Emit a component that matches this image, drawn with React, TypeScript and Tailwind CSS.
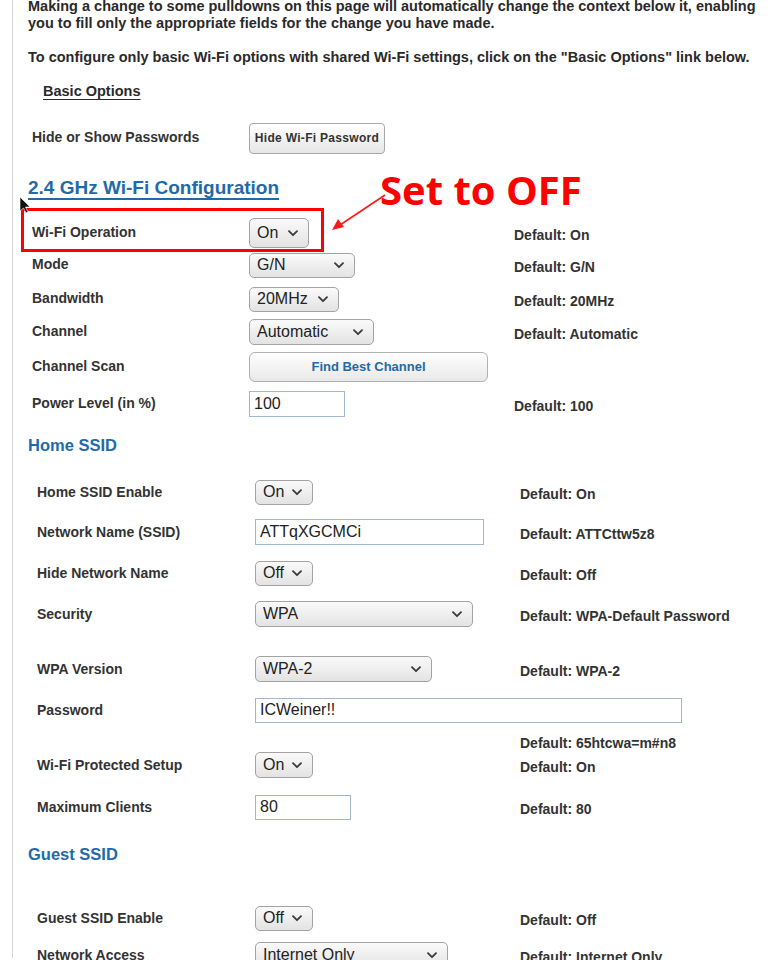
import React from "react";

function Chevron() {
  return (
    <svg width="10" height="7" viewBox="0 0 10 7" className="shrink-0">
      <polyline points="1,1.2 5,5.2 9,1.2" fill="none" stroke="#3a3a3a" strokeWidth="1.8" strokeLinecap="round" strokeLinejoin="round" />
    </svg>
  );
}

function Sel({ text, cls }: { text: string; cls: string }) {
  return (
    <div className={`flex items-center justify-between rounded-[5px] border border-[#a3a3a3] bg-linear-to-b from-[#fafafa] to-[#e3e3e3] pl-[7px] pr-[10px] text-[16px] leading-none text-[#222] ${cls}`}>
      <span>{text}</span>
      <Chevron />
    </div>
  );
}

function Inp({ text, cls }: { text: string; cls: string }) {
  return (
    <div className={`flex items-center border border-[#a2b6cd] bg-white px-[4px] text-[16px] leading-none text-[#222] ${cls}`}>
      {text}
    </div>
  );
}

function Row1({ label, def, children, cls }: { label: string; def?: string; children?: React.ReactNode; cls: string }) {
  return (
    <div className={`flex h-[32px] items-center ${cls}`}>
      <div className="w-[221px] shrink-0 pl-[4px] -mt-[1px] text-[14px] font-bold text-[#333]">{label}</div>
      <div className="w-[265px] shrink-0 flex items-center">{children}</div>
      {def && <div className="mt-[4px] text-[14px] font-bold text-[#333]">{def}</div>}
    </div>
  );
}

function Row2({ label, def, children, cls }: { label: string; def?: string; children?: React.ReactNode; cls: string }) {
  return (
    <div className={`flex h-[32px] items-center ${cls}`}>
      <div className="w-[227px] shrink-0 pl-[9px] mt-[1px] text-[14px] font-bold text-[#333]">{label}</div>
      <div className="w-[265px] shrink-0 flex items-center">{children}</div>
      {def && <div className="mt-[5px] text-[14px] font-bold text-[#333]">{def}</div>}
    </div>
  );
}

export default function App() {
  return (
    <div className="relative h-[960px] w-[768px] overflow-hidden bg-white font-['Liberation_Sans',Arial,sans-serif]">
      <div className="ml-[12px] h-full border-l border-[#d4d4d4] pl-[15px]">
        <p className="-mt-[2px] w-[730px] text-[14.5px] font-bold leading-[17px] text-[#2a2a2a]">
          Making a change to some pulldowns on this page will automatically change the context below it, enabling you to fill only the appropriate fields for the change you have made.
        </p>
        <p className="mt-[17px] text-[14.5px] font-bold leading-[17px] text-[#2a2a2a]">
          To configure only basic Wi-Fi options with shared Wi-Fi settings, click on the "Basic Options" link below.
        </p>
        <div className="mt-[17px] pl-[15px] text-[14.5px] font-bold leading-[17px] text-[#2a2a2a] underline underline-offset-[3px]">
          Basic Options
        </div>

        <Row1 label="Hide or Show Passwords" cls="mt-[22px]">
          <div className="flex h-[31px] w-[136px] items-center justify-center rounded-[4px] border border-[#a8a8a8] bg-linear-to-b from-[#ffffff] to-[#e6e6e6] text-[12px] font-bold tracking-[0.3px] text-[#333]">
            Hide Wi-Fi Password
          </div>
        </Row1>

        <div className="mt-[22px] h-[24px] text-[19px] font-bold leading-[24px] text-[#1f6aa8] underline decoration-2 underline-offset-[4px]">
          2.4 GHz Wi-Fi Configuration
        </div>

        <Row1 label="Wi-Fi Operation" def="Default: On" cls="mt-[17px]">
          <Sel text="On" cls="h-[30px] w-[60px]" />
        </Row1>
        <Row1 label="Mode" def="Default: G/N" cls="mt-0">
          <Sel text="G/N" cls="h-[25px] w-[106px]" />
        </Row1>
        <Row1 label="Bandwidth" def="Default: 20MHz" cls="mt-[2px]">
          <Sel text="20MHz" cls="h-[25px] w-[90px]" />
        </Row1>
        <Row1 label="Channel" def="Default: Automatic" cls="mt-[1px]">
          <Sel text="Automatic" cls="h-[26px] w-[125px]" />
        </Row1>
        <Row1 label="Channel Scan" cls="mt-[3px]">
          <div className="flex h-[30px] w-[239px] items-center justify-center rounded-[6px] border border-[#b0b0b0] bg-linear-to-b from-[#ffffff] to-[#e8e8e8] text-[13px] font-bold text-[#1f6aa8]">
            Find Best Channel
          </div>
        </Row1>
        <Row1 label="Power Level (in %)" def="Default: 100" cls="mt-[5px]">
          <Inp text="100" cls="h-[26px] w-[96px]" />
        </Row1>

        <div className="mt-[14px] h-[22px] text-[16.5px] font-bold leading-[22px] text-[#1f6aa8]">Home SSID</div>

        <Row2 label="Home SSID Enable" def="Default: On" cls="mt-[20px]">
          <Sel text="On" cls="h-[25px] w-[58px]" />
        </Row2>
        <Row2 label="Network Name (SSID)" def="Default: ATTCttw5z8" cls="mt-[8px]">
          <Inp text="ATTqXGCMCi" cls="h-[26px] w-[229px]" />
        </Row2>
        <Row2 label="Hide Network Name" def="Default: Off" cls="mt-[9px]">
          <Sel text="Off" cls="h-[25px] w-[58px]" />
        </Row2>
        <Row2 label="Security" def="Default: WPA-Default Password" cls="mt-[9px]">
          <Sel text="WPA" cls="h-[26px] w-[218px]" />
        </Row2>
        <Row2 label="WPA Version" def="Default: WPA-2" cls="mt-[23px]">
          <Sel text="WPA-2" cls="h-[26px] w-[177px]" />
        </Row2>
        <Row2 label="Password" cls="mt-[9px]">
          <Inp text="ICWeiner!!" cls="h-[25px] w-[427px] shrink-0" />
        </Row2>
        <div className="mt-[10px] flex h-[14px] items-center">
          <div className="ml-[492px] text-[14px] font-bold text-[#333]">Default: 65htcwa=m#n8</div>
        </div>
        <Row2 label="Wi-Fi Protected Setup" def="Default: On" cls="-mt-[1px] h-[30px]">
          <Sel text="On" cls="h-[26px] w-[58px]" />
        </Row2>
        <Row2 label="Maximum Clients" def="Default: 80" cls="mt-[10px]">
          <Inp text="80" cls="h-[25px] w-[96px]" />
        </Row2>

        <div className="mt-[20px] h-[22px] text-[16.5px] font-bold leading-[22px] text-[#1f6aa8]">Guest SSID</div>

        <Row2 label="Guest SSID Enable" def="Default: Off" cls="mt-[37px]">
          <Sel text="Off" cls="h-[25px] w-[58px]" />
        </Row2>
        <Row2 label="Network Access" def="Default: Internet Only" cls="mt-[5px]">
          <Sel text="Internet Only" cls="h-[26px] w-[193px]" />
        </Row2>
      </div>

      {/* annotation overlay */}
      <div className="absolute left-[21px] top-[208px] h-[44px] w-[303px] border-[3px] border-[#ff0000]" />
      <div className="absolute left-[380px] top-[164px] text-[40px] font-bold leading-[52px] text-[#ff0000] font-['Open_Sans',sans-serif]">
        Set to OFF
      </div>
      <svg className="absolute left-0 top-0" width="768" height="960" viewBox="0 0 768 960">
        <line x1="385" y1="195" x2="340" y2="225" stroke="#ff1a1a" strokeWidth="1.6" />
        <polygon points="332,230 338,219 344,227" fill="#ff1a1a" />
        <polygon points="20,197 20,211 23.5,208 26,213 28,212 25.5,207 30,207" fill="#111" stroke="#fff" strokeWidth="0.6" />
      </svg>
    </div>
  );
}
